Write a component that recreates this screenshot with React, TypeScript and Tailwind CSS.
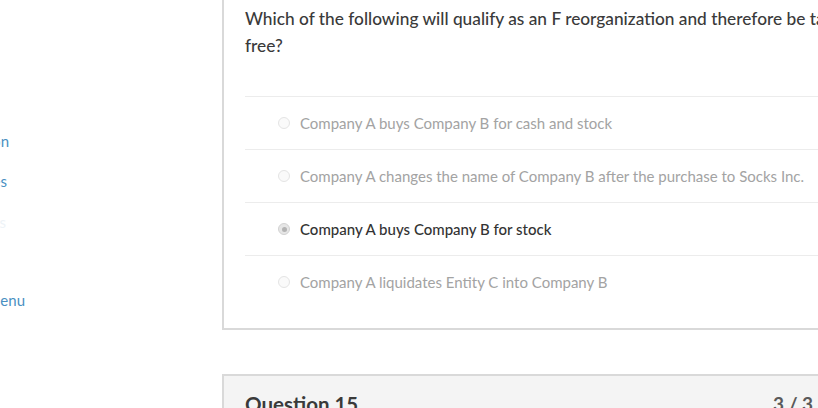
import React from "react";

const options = [
  { text: "Company A buys Company B for cash and stock", selected: false },
  { text: "Company A changes the name of Company B after the purchase to Socks Inc.", selected: false },
  { text: "Company A buys Company B for stock", selected: true },
  { text: "Company A liquidates Entity C into Company B", selected: false },
];

function Radio({ selected }: { selected: boolean }) {
  return (
    <span
      className={
        "w-[12px] h-[12px] rounded-full shrink-0 flex items-center justify-center border " +
        (selected ? "border-[#d2d2d2] bg-[#e6e6e6]" : "border-[#e4e4e4] bg-[#fafafa]")
      }
    >
      {selected && <span className="w-[5px] h-[5px] rounded-full bg-[#b3b3b3]" />}
    </span>
  );
}

function NavItem({ text, faint, w }: { text: string; faint?: boolean; w: string }) {
  return (
    <div className={w + " flex justify-end whitespace-nowrap"}>
      <span className={faint ? "text-[#eef3f7]" : "text-[#4a90c2]"}>{text}</span>
    </div>
  );
}

export default function App() {
  return (
    <div
      className="w-[818px] h-[408px] overflow-hidden bg-white flex"
      style={{ fontFamily: "Lato, 'Open Sans', sans-serif" }}
    >
      <div className="w-[222px] shrink-0 text-[15px] leading-[20px]">
        <div className="h-[131px]" />
        <NavItem text="Discussion" w="w-[9px]" />
        <div className="h-[20px]" />
        <NavItem text="Quizzes" w="w-[7px]" />
        <div className="h-[21px]" />
        <NavItem text="Files" w="w-[6px]" faint />
        <div className="h-[58px]" />
        <NavItem text="Collapse Menu" w="w-[25px]" />
      </div>
      <div className="flex-1 min-w-0 flex flex-col">
        <div className="w-[640px] border-l-2 border-b-2 border-[#d9d9d9] pl-[21px] pb-[20px]">
          <p className="pt-[5px] text-[17.3px] leading-[27px] text-[#3a3a3a] font-medium whitespace-nowrap">
            Which of the following will qualify as an F reorganization and therefore be tax
          </p>
          <p className="text-[17.3px] leading-[27px] text-[#3a3a3a] font-medium">free?</p>
          <div className="mt-[37px]">
            {options.map((o, i) => (
              <div
                key={i}
                className="h-[53px] border-t border-[#ececec] flex items-center pl-[33px] gap-[10px] whitespace-nowrap"
              >
                <Radio selected={o.selected} />
                <span
                  className={
                    "text-[15px] " +
                    (o.selected ? "text-[#333333] font-medium" : "text-[#a3a3a3]")
                  }
                >
                  {o.text}
                </span>
              </div>
            ))}
          </div>
        </div>
        <div className="mt-[44px] w-[640px] border-2 border-[#d9d9d9] bg-[#f4f4f4] pl-[21px] pt-[14px] h-[80px] flex whitespace-nowrap">
          <span className="w-[528px] shrink-0 text-[20.5px] leading-[28px] font-bold text-[#3a3a3a]">Question 15</span>
          <span className="text-[19px] leading-[28px] font-bold text-[#5a5a5a]">3 / 3 pts</span>
        </div>
      </div>
    </div>
  );
}
